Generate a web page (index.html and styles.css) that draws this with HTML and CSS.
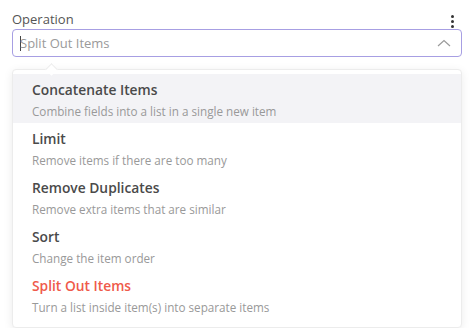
FILE: index.html
```html
<!DOCTYPE html>
<html lang="en">
<head>
  <meta charset="UTF-8">
  <title>Operation</title>
  <link rel="stylesheet" href="styles.css">
</head>
<body>
  <div class="field">
    <div class="field-head">
      <label class="field-label">Operation</label>
      <span class="more">
        <i></i><i></i><i></i>
      </span>
    </div>

    <div class="select-box">
      <span class="caret"></span>
      <span class="placeholder">Split Out Items</span>
      <svg class="chevron" width="14" height="8" viewBox="0 0 14 8">
        <path d="M1 7 L7 1.5 L13 7" fill="none" stroke="#9a9a9a" stroke-width="1.2"/>
      </svg>
    </div>

    <div class="dropdown">
      <ul class="options">
        <li class="option hover">
          <div class="opt-title">Concatenate Items</div>
          <div class="opt-desc">Combine fields into a list in a single new item</div>
        </li>
        <li class="option">
          <div class="opt-title">Limit</div>
          <div class="opt-desc">Remove items if there are too many</div>
        </li>
        <li class="option">
          <div class="opt-title">Remove Duplicates</div>
          <div class="opt-desc">Remove extra items that are similar</div>
        </li>
        <li class="option">
          <div class="opt-title">Sort</div>
          <div class="opt-desc">Change the item order</div>
        </li>
        <li class="option selected">
          <div class="opt-title">Split Out Items</div>
          <div class="opt-desc">Turn a list inside item(s) into separate items</div>
        </li>
      </ul>
    </div>
  </div>
</body>
</html>
```

FILE: styles.css
```css
body {
  margin: 0;
  padding: 10px 12px 0 12px;
  font-family: 'Open Sans', 'Noto Sans', sans-serif;
  background: #ffffff;
  color: #555;
}

.field {
  width: 450px;
}

.field-head {
  display: flex;
  justify-content: space-between;
  align-items: center;
  height: 18px;
  margin-bottom: 1px;
}

.field-label {
  font-size: 13px;
  color: #555;
}

.more {
  display: flex;
  flex-direction: column;
  gap: 2px;
  padding-right: 8px;
  margin-top: 4px;
}

.more i {
  display: block;
  width: 3px;
  height: 3px;
  border-radius: 50%;
  background: #333;
}

.select-box {
  height: 26px;
  border: 1px solid #a79fe3;
  border-radius: 4px;
  display: flex;
  align-items: center;
  padding: 0 7px 0 7px;
}

.caret {
  width: 1px;
  height: 15px;
  background: #444;
}

.placeholder {
  flex: 1;
  font-size: 13px;
  color: #9a9a9a;
  margin-left: -1px;
}

.chevron {
  margin-right: 3px;
}

.dropdown {
  position: relative;
  margin-top: 12px;
  border: 1px solid #ececec;
  border-radius: 4px;
  background: #fff;
  box-shadow: 0 2px 10px rgba(0, 0, 0, 0.08);
}

.dropdown::before {
  content: '';
  position: absolute;
  top: -5px;
  left: 34px;
  width: 8px;
  height: 8px;
  background: #fff;
  border-top: 1px solid #ececec;
  border-left: 1px solid #ececec;
  transform: rotate(45deg);
}

.options {
  list-style: none;
  margin: 0;
  padding: 4px 0 8px 0;
}

.option {
  height: 49px;
  padding: 6px 20px 0 19px;
  box-sizing: border-box;
}

.option.hover {
  background: #f3f3f6;
}

.opt-title {
  font-size: 13.8px;
  font-weight: 600;
  line-height: 20px;
  color: #4a4a4a;
}

.opt-desc {
  font-size: 11.7px;
  line-height: 18px;
  margin-top: 2px;
  color: #999;
}

.option.selected .opt-title {
  color: #ef5a4a;
}
```
